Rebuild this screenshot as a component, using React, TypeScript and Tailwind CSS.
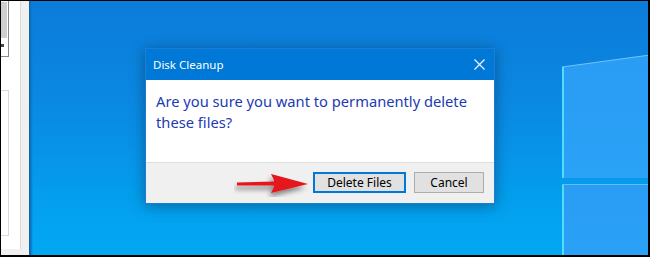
import React from 'react';

const font = { fontFamily: '"Noto Sans", "Open Sans", sans-serif' };

function WinLogo() {
  // desktop wallpaper panes (drawing)
  return (
    <svg className="absolute inset-0 pointer-events-none" width="650" height="257" viewBox="0 0 650 257">
      <defs>
        <linearGradient id="pane" x1="0" y1="0" x2="0" y2="1">
          <stop offset="0" stopColor="#2a9cf4" />
          <stop offset="1" stopColor="#2aa2f6" />
        </linearGradient>
      </defs>
      <polygon points="562,66 650,54 650,177 562,177" fill="url(#pane)" />
      <polygon points="562,183 650,183 650,257 562,257" fill="url(#pane)" />
      <line x1="563" y1="66" x2="563" y2="177" stroke="#52dcf7" strokeWidth="2" />
      <line x1="563" y1="183" x2="563" y2="257" stroke="#52dcf7" strokeWidth="2" />
      <line x1="562" y1="66" x2="650" y2="54" stroke="#6cc6f7" strokeWidth="1" />
      <line x1="562" y1="183.5" x2="650" y2="183.5" stroke="#5ec1f6" strokeWidth="1" />
    </svg>
  );
}

function RedArrow() {
  return (
    <svg className="absolute left-[88px] top-[0px]" width="80" height="34" viewBox="0 0 80 34">
      <defs>
        <filter id="sh" x="-20%" y="-40%" width="140%" height="200%">
          <feDropShadow dx="-2" dy="4" stdDeviation="2.5" floodColor="#000" floodOpacity="0.45" />
        </filter>
      </defs>
      <g filter="url(#sh)">
        <path d="M3 19.5 L40 18.5 L40 17 L37 11 L74 21 L37 30 L40 24 L40 22.5 L3 22.5 Z" fill="#e5141b" />
      </g>
    </svg>
  );
}

export default function App() {
  return (
    <div className="w-[650px] h-[257px] overflow-hidden border-t border-l border-r-2 border-b-2 border-black flex" style={font}>
      {/* left explorer window edge */}
      <div className="w-[28px] h-full bg-[#f0f0f0] flex flex-col">
        <div className="w-[20px] h-[248px] bg-white border-r border-[#d9d9d9] flex flex-col">
          <div className="w-[8px] h-[56px] border-r border-b border-[#8a8a8a] pt-[1px]">
            <div className="w-[6px] h-[36px] bg-[#cfcfcf]" />
            <div className="w-[3px] h-[3px] bg-[#444] mt-[6px]" />
          </div>
          <div className="w-[8px] h-[146px] mt-[33px] border-r border-t border-b border-[#d9d9d9]" />
        </div>
      </div>

      {/* desktop */}
      <div className="relative flex-1 h-full bg-[linear-gradient(180deg,#0c7bd9_0%,#0a89e2_40%,#03a2f0_85%,#02a8f2_100%)]">
        <div className="absolute left-0 top-0 h-full w-[4px] bg-[linear-gradient(90deg,#0a5e9e,#0b79c9,transparent)]" />
        <div className="absolute -left-[29px] top-0">
          <WinLogo />
        </div>

        {/* dialog */}
        <div className="absolute left-[116px] top-[47px] w-[350px] flex flex-col border border-[#1a7fd4] shadow-[0_2px_14px_rgba(0,0,0,0.35)]">
          <div className="h-[31px] bg-[#0078d7] flex items-center justify-between pl-[7px] pr-[9px]">
            <span className="text-white text-[11.5px]">Disk Cleanup</span>
            <svg width="11" height="11" viewBox="0 0 11 11">
              <path d="M0.5 0.5 L10.5 10.5 M10.5 0.5 L0.5 10.5" stroke="#fff" strokeWidth="1.1" />
            </svg>
          </div>
          <div className="h-[82px] bg-white pl-[10px] pr-[6px] pt-[11px]">
            <p className="text-[14.7px] leading-[21px] text-[#1c3bb3]">
              Are you sure you want to permanently delete these files?
            </p>
          </div>
          <div className="relative h-[41px] bg-[#f0f0f0] border-t border-[#dfdfdf] flex justify-end items-start gap-[8px] pt-[9px] pr-[10px]">
            <RedArrow />
            <button className="w-[93px] h-[21px] bg-[#e1e1e1] border-2 border-[#0078d7] text-[12px] text-black leading-none">
              Delete Files
            </button>
            <button className="w-[70px] h-[21px] bg-[#e1e1e1] border border-[#adadad] text-[12px] text-black leading-none">
              Cancel
            </button>
          </div>
        </div>
      </div>
    </div>
  );
}
